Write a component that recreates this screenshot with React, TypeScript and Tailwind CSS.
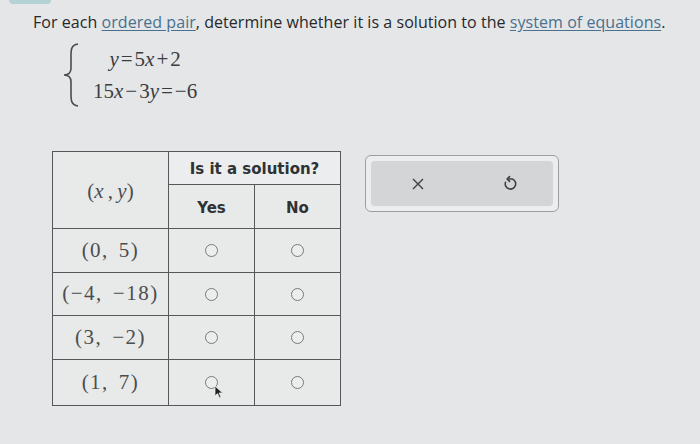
import React from 'react';

const rows: React.ReactNode[] = [
  <>(0,&#8202; 5)</>,
  <>(−4,&#8202; −18)</>,
  <>(3,&#8202; −2)</>,
  <>(1,&#8202; 7)</>,
];
const rowHeights = ['h-[44px]', 'h-[43px]', 'h-[44px]', 'h-[46px]'];

function Radio() {
  return <span className="inline-block h-[13px] w-[13px] rounded-full border border-[#77797c] bg-[#eceded]" />;
}

function Brace() {
  return (
    <svg width="20" height="68" viewBox="0 0 20 66" className="shrink-0">
      <path
        d="M17 2 C10 3 10 8 10 14 L10 26 C10 31 8 33 3 33 C8 33 10 35 10 40 L10 52 C10 58 10 63 17 64"
        fill="none"
        stroke="#4a4d50"
        strokeWidth="1.6"
      />
    </svg>
  );
}

function UndoIcon() {
  return (
    <svg width="16" height="17" viewBox="0 0 14 15">
      <path d="M5 3.5 L9 3.5 A4.6 4.6 0 1 1 3 6.5" fill="none" stroke="#3c4043" strokeWidth="1.4" strokeLinecap="round" />
      <path d="M6.6 1.4 L4.4 3.5 L6.6 5.6" fill="none" stroke="#3c4043" strokeWidth="1.4" strokeLinecap="round" strokeLinejoin="round" />
    </svg>
  );
}

function Op({ children }: { children: React.ReactNode }) {
  return <span className="mx-[2px]">{children}</span>;
}

export default function App() {
  const sans = { fontFamily: '"Open Sans", "DejaVu Sans", sans-serif' };
  const verdana = { fontFamily: '"DejaVu Sans", Verdana, sans-serif' };
  const serif = { fontFamily: '"Liberation Serif", "Times New Roman", serif' };
  return (
    <div className="relative h-[444px] w-[700px] overflow-hidden bg-[#e5e6e7] text-[#26292c]" style={sans}>
      <div className="ml-[9px] h-[4px] w-[42px] rounded-b-lg bg-[#b4d2d3]" />
      <p className="pl-[33px] pt-[8px] text-[16px] leading-[20px] tracking-[0.05px]">
        For each <span className="text-[#49708f] underline underline-offset-2">ordered pair</span>, determine whether it is a
        solution to the <span className="text-[#49708f] underline underline-offset-2">system of equations</span>.
      </p>

      <div className="ml-[61px] mt-[9px] flex items-center" style={serif}>
        <Brace />
        <div className="ml-[12px] flex flex-col items-center text-[21px] leading-[32px] text-[#3a3d40]">
          <div>
            <i>y</i>
            <Op>=</Op>5<i>x</i>
            <Op>+</Op>2
          </div>
          <div>
            15<i>x</i>
            <Op>−</Op>3<i>y</i>
            <Op>=</Op>−6
          </div>
        </div>
      </div>

      <div className="ml-[52px] mt-[42px] flex items-start">
        <table className="border-collapse border border-[#55585b] bg-[#e8e9e9]">
          <tbody>
            <tr className="h-[33px]">
              <td
                rowSpan={2}
                className="w-[116px] border border-[#55585b] pt-[4px] text-center text-[21px] text-[#4a4d50]"
                style={serif}
              >
                (<i>x</i>&#8201;,&#8201;<i>y</i>)
              </td>
              <td
                colSpan={2}
                className="border border-[#55585b] bg-[#ecedee] pt-[2px] text-center text-[15px] font-bold text-[#2f3235]"
                style={verdana}
              >
                Is it a solution?
              </td>
            </tr>
            <tr className="h-[44px]">
              <td className="w-[86px] border border-[#55585b] pt-[3px] text-center text-[15px] font-bold text-[#2f3235]" style={verdana}>
                Yes
              </td>
              <td className="w-[86px] border border-[#55585b] pt-[3px] text-center text-[15px] font-bold text-[#2f3235]" style={verdana}>
                No
              </td>
            </tr>
            {rows.map((r, i) => (
              <tr key={i} className={rowHeights[i]}>
                <td className="border border-[#55585b] text-center text-[21px] tracking-[1.5px] text-[#4a4d50]" style={serif}>
                  {r}
                </td>
                <td className="relative border border-[#55585b] text-center">
                  <div className="flex items-center justify-center">
                    <Radio />
                  </div>
                  {i === 3 && (
                    <svg width="10" height="14" viewBox="0 0 10 14" className="absolute left-[45px] top-[25px]">
                      <path d="M1 1 L1 11 L3.5 8.6 L5.5 13 L7 12.3 L5.1 8 L8.6 8 Z" fill="#1f2124" stroke="#e8e9e9" strokeWidth="0.8" />
                    </svg>
                  )}
                </td>
                <td className="border border-[#55585b] text-center">
                  <div className="flex items-center justify-center">
                    <Radio />
                  </div>
                </td>
              </tr>
            ))}
          </tbody>
        </table>

        <div className="ml-[24px] mt-[4px] flex h-[57px] w-[194px] rounded-md border-[1.5px] border-[#9c9fa2] bg-[#eceded] p-[5px]">
          <div className="flex flex-1 items-center rounded-sm bg-[#d4d5d6] pl-[41px]">
            <svg width="12" height="12" viewBox="0 0 12 12">
              <path d="M1 1 L11 11 M11 1 L1 11" stroke="#3c4043" strokeWidth="1.4" />
            </svg>
            <div className="ml-[78px]">
              <UndoIcon />
            </div>
          </div>
        </div>
      </div>
    </div>
  );
}
